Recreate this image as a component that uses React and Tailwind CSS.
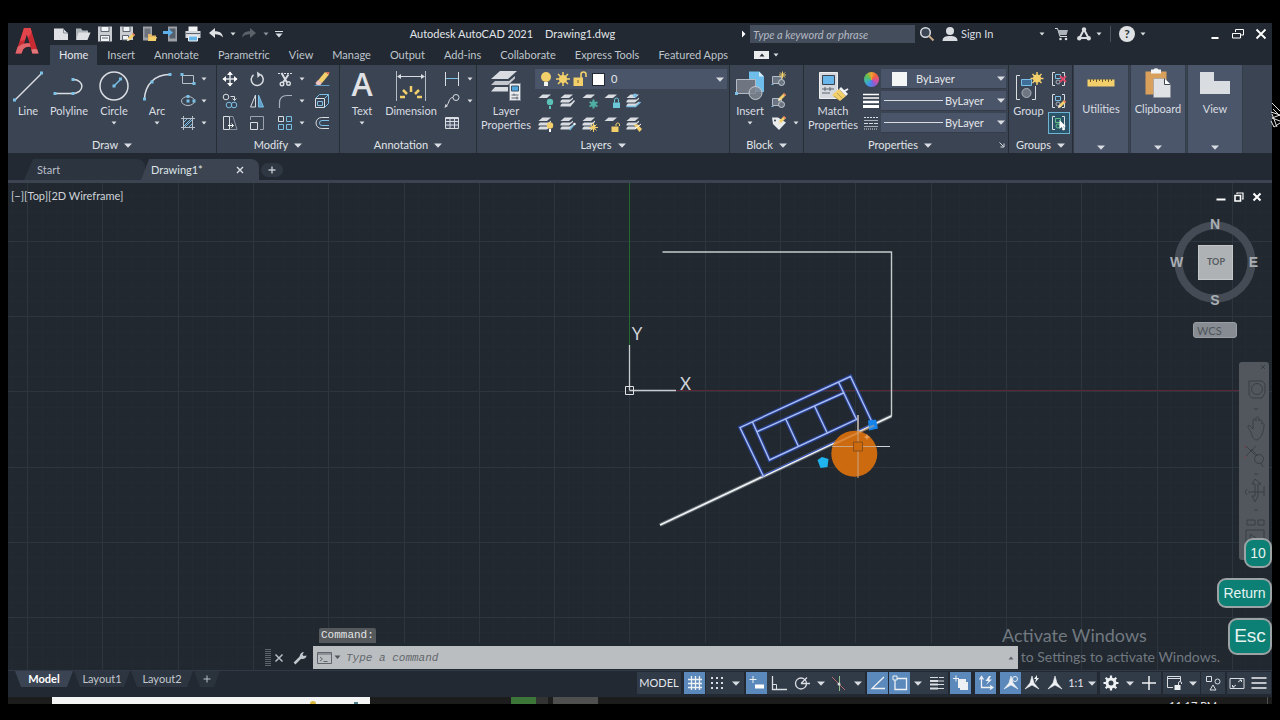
import React from "react";

/* ---------- shared helpers ---------- */

const LIGHT = "#d9dde2";
const BLUE = "#79bfe6";
const YELLOW = "#f3cf6b";

function Svg({ s = 16, w, h, vb, children, className = "" }) {
  return (
    <svg
      aria-hidden="true"
      width={w || s}
      height={h || s}
      viewBox={vb || `0 0 ${w || s} ${h || s}`}
      fill="none"
      stroke={LIGHT}
      className={`block shrink-0 ${className}`}
    >
      {children}
    </svg>
  );
}

function Caret({ className = "", big = false }) {
  return big ? (
    <Svg w={8} h={5} className={className}>
      <path d="M0 0.500h8L4 4.800z" fill={LIGHT} stroke="none" />
    </Svg>
  ) : (
    <Svg w={6} h={4} className={className}>
      <path d="M0.500 0.500h5L3 3.500z" fill={LIGHT} stroke="none" />
    </Svg>
  );
}

function IconButton({ label, className = "", children }) {
  return (
    <button type="button" aria-label={label} className={`flex shrink-0 items-center justify-center ${className}`}>
      {children}
    </button>
  );
}

/* ---------- quick access icons ---------- */

const Pencil = ({ x = 0, y = 0 }) => (
  <g transform={`translate(${x} ${y})`} stroke="none">
    <path d="M0 8l1-3 5-5 2 2-5 5z" fill={YELLOW} />
    <path d="M5 1l1-1 2 2-1 1z" fill="#e2705a" />
    <path d="M0 8l1-3 2 2z" fill="#f4ece0" />
  </g>
);

const NewIcon = () => (
  <Svg><path d="M1 2.500h9l5 5V14H1z" fill="#dfe1e4" stroke="none" /><path d="M10.500 2.500V7H15" stroke="#8b929c" /></Svg>
);
const OpenIcon = () => (
  <Svg><path d="M1 13V2.500h5l1.500 2H13V7" fill="#aeb3ba" stroke="none" /><path d="M3.500 6.500H15.500L12.500 14H1z" fill="#dfe1e4" stroke="none" /></Svg>
);
const SaveIcon = () => (
  <Svg>
    <path d="M1 0.500h14V15.500H1z" fill="#c9ccd1" stroke="none" />
    <path d="M4 0.500h8v5H4zM3.500 9.500h9v6h-9z" fill="#f2f3f4" stroke="#5d6571" />
    <path d="M5 12h6" stroke="#5d6571" />
  </Svg>
);
const SaveAsIcon = () => (
  <Svg>
    <path d="M1 0.500h13V14H1z" fill="#c9ccd1" stroke="none" />
    <path d="M4 0.500h7v5H4zM3.500 9.500h6V14h-6z" fill="#f2f3f4" stroke="#5d6571" />
    <Pencil x={8} y={7} />
  </Svg>
);
const WebOpenIcon = () => (
  <Svg>
    <path d="M2 0.500h9v14H2z" fill="#9da1a7" stroke="none" />
    <path d="M3.500 2.500h6v9h-6z" fill="#6d737c" stroke="none" />
    <path d="M7 8h3l1 1.500h4V15H7z" fill="#e5b968" stroke="none" />
    <path d="M8.500 11H16l-1.500 4H7z" fill={YELLOW} stroke="none" />
  </Svg>
);
const WebSaveIcon = () => (
  <Svg>
    <path d="M5 0.500h9v15H5z" fill="#9da1a7" stroke="none" />
    <path d="M6.500 2.500h6v10h-6z" fill="#56606d" stroke="none" />
    <path d="M0 5h5V2.500L10 6.500 5 10.500V8H0z" fill="#5fb0e8" stroke="none" />
  </Svg>
);
const PrintIcon = () => (
  <Svg>
    <path d="M3.500 0.500h9V5h-9z" fill="#f2f3f4" stroke="none" />
    <path d="M0.500 5h15v7h-15z" fill="#d5d8dc" stroke="none" />
    <path d="M1 7.500h14" stroke="#5d6571" />
    <path d="M3.500 10h9v5h-9z" fill="#69b7ea" stroke="#f2f3f4" />
  </Svg>
);
const UndoIcon = ({ dim }) => (
  <Svg className={dim ? "-scale-x-100 opacity-30" : ""}>
    <path d="M1 7l6-5v3.200c5 0 7.500 2 8 6.300-2-2.500-4.500-3.200-8-3.200V12z" fill="#dfe1e4" stroke="none" />
  </Svg>
);

const quickIcons = [
  ["New", NewIcon], ["Open", OpenIcon], ["Save", SaveIcon], ["Save As", SaveAsIcon],
  ["Open from Web", WebOpenIcon], ["Save to Web", WebSaveIcon], ["Plot", PrintIcon],
];

/* ---------- header ---------- */

function TitleBar() {
  return (
    <div className="flex h-[22px] items-center">
      <div className="flex w-[238px] shrink-0 items-center">
        {quickIcons.map(([label, I]) => (
          <IconButton key={label} label={label} className="w-[22px]"><I /></IconButton>
        ))}
        <IconButton label="Undo" className="w-6"><UndoIcon /></IconButton>
        <IconButton label="Undo list" className="w-[10px]"><Caret /></IconButton>
        <IconButton label="Redo" className="w-[22px]"><UndoIcon dim /></IconButton>
        <IconButton label="Redo list" className="w-3"><Caret className="opacity-60" /></IconButton>
        <IconButton label="Customize quick access" className="w-[14px]">
          <Svg s={8}><path d="M0 1.500h8" /><path d="M0.500 3.500h7L4 7.500z" fill={LIGHT} stroke="none" /></Svg>
        </IconButton>
      </div>
      <h1 className="flex flex-1 justify-center gap-3 text-[11px] leading-4 whitespace-nowrap text-[#e0e4e8]">
        <span>Autodesk AutoCAD 2021</span>
        <span>Drawing1.dwg</span>
      </h1>
      <div className="flex shrink-0 items-center">
        <IconButton label="Collapse search" className="w-[13px]">
          <Svg w={5} h={8}><path d="M1 0.500v7L4.500 4z" fill="#fff" stroke="none" /></Svg>
        </IconButton>
        <input
          type="search"
          aria-label="Search"
          placeholder="Type a keyword or phrase"
          className="h-[18px] w-[165px] bg-[#444d5c] px-[3px] text-[11px] leading-4 text-white italic outline-none placeholder:text-[#b3b9c2]"
        />
        <IconButton label="Find" className="w-6">
          <Svg><circle cx="6.500" cy="6.500" r="4.800" fill="#3c4654" strokeWidth="1.500" /><path d="M10 10l4.500 4.500" stroke="#c7a987" strokeWidth="2" /></Svg>
        </IconButton>
        <button type="button" className="flex items-center text-[11px] leading-4 text-[#d9dde2]">
          <span className="flex w-[22px] justify-center">
            <Svg><circle cx="8" cy="5" r="4" fill={LIGHT} stroke="none" /><path d="M0.500 15c0-4 3-5 7.500-5s7.500 1 7.500 5z" fill={LIGHT} stroke="none" /></Svg>
          </span>
          <span className="w-[73px] text-left">Sign In</span>
          <span className="flex w-4 justify-center"><Caret /></span>
        </button>
        <IconButton label="Autodesk App Store" className="w-6">
          <Svg w={14} h={14}>
            <path d="M0 1.500h2.500L5 9.500h7" /><path d="M3 3h10l-1.500 5H4.500z" fill="#aeb3ba" stroke="none" />
            <circle cx="5.500" cy="12" r="1.300" fill={LIGHT} stroke="none" /><circle cx="11" cy="12" r="1.300" fill={LIGHT} stroke="none" />
          </Svg>
        </IconButton>
        <IconButton label="Stay Connected" className="w-5">
          <Svg w={14} h={14}>
            <path d="M7 2.500L2.500 11M7 2.500L11.500 11M2.500 11h9" strokeWidth="2" />
            <circle cx="7" cy="2.500" r="2.200" fill={LIGHT} stroke="none" /><circle cx="2.300" cy="11.300" r="2.200" fill={LIGHT} stroke="none" /><circle cx="11.700" cy="11.300" r="2.200" fill={LIGHT} stroke="none" />
          </Svg>
        </IconButton>
        <IconButton label="Connection options" className="w-[10px]"><Caret /></IconButton>
        <span className="mr-1 ml-1.5 h-4 w-px bg-[#4a525d]" />
        <button type="button" aria-label="Help" className="mx-1 flex size-4 items-center justify-center rounded-full bg-[#dfe1e4] text-[12px] leading-4 font-bold text-[#2a313b]">?</button>
        <IconButton label="Help options" className="w-2"><Caret /></IconButton>
        <IconButton label="Minimize" className="ml-[57px] h-[18px] w-[22px]">
          <Svg s={12}><path d="M2.500 10h7" strokeWidth="2" stroke="#fff" /></Svg>
        </IconButton>
        <IconButton label="Restore" className="w-6">
          <Svg s={12}><path d="M3.500 4V1.500h8v5.500H9" stroke="#fff" /><path d="M0.500 5.500h8V10h-8z" stroke="#fff" /></Svg>
        </IconButton>
        <IconButton label="Close" className="w-[22px]">
          <Svg s={12}><path d="M1.500 1.500l9 9M10.500 1.500l-9 9" stroke="#fff" strokeWidth="1.800" /></Svg>
        </IconButton>
      </div>
    </div>
  );
}

const ribbonTabs = ["Home", "Insert", "Annotate", "Parametric", "View", "Manage", "Output", "Add-ins", "Collaborate", "Express Tools", "Featured Apps"];

function Header() {
  return (
    <header className="flex">
      <button type="button" aria-label="Application menu" className="flex w-[42px] shrink-0 items-start justify-center pt-1 pr-[5px]">
        <Svg w={24} h={28}>
          <path d="M9 1h6.500L23.500 26.500h-6.200L15.500 20C12 19 9.500 20.500 8 22.500L6.500 26.500H0.500z" fill="#c92b33" stroke="none" />
          <path d="M9 1h6.500l1.200 4c-2 5-6 9-11.700 9z" fill="#e2444c" stroke="none" />
          <path d="M11.800 7.500l2.700 8.500c-2 0-4 .5-5.600 1.200z" fill="#222932" stroke="none" />
          <path d="M0.500 26.500l2-6.500c4-3.500 9-4.500 12.300-3.500l.7 3.500C12 19 9.500 20.500 8 22.500L6.500 26.500z" fill="#e0666c" stroke="none" />
          <path d="M17.300 26.500l-1-4c2-.8 4-.8 6 0l1.200 4z" fill="#e0777c" stroke="none" />
        </Svg>
      </button>
      <div className="min-w-0 flex-1">
        <TitleBar />
        <nav aria-label="Ribbon tabs" className="flex h-5 items-center gap-px">
          {ribbonTabs.map((t, i) => (
            <button
              key={t}
              type="button"
              className={`h-5 px-[9px] text-[11px] leading-5 whitespace-nowrap ${i === 0 ? "bg-[#3b4453] text-[#e4e7eb]" : "text-[#bfc5cc]"}`}
            >
              {t}
            </button>
          ))}
          <IconButton label="Minimize ribbon" className="ml-4 h-2 w-[15px] bg-[#e9ebed]">
            <Svg w={6} h={4}><path d="M0.500 3.500h5L3 0.500z" fill="#222932" stroke="none" /></Svg>
          </IconButton>
          <IconButton label="Ribbon options" className="w-3"><Caret /></IconButton>
        </nav>
      </div>
    </header>
  );
}

/* ---------- ribbon pieces ---------- */

function Panel({ title, className = "", children, launcher = false }) {
  return (
    <section aria-label={title} className={`flex shrink-0 flex-col border-r border-[#262d37] bg-[#3b4453] ${className}`}>
      <div className="flex h-[72px] pt-[3px]">{children}</div>
      <div className="flex items-center">
        <button type="button" className="flex h-4 flex-1 items-center justify-center gap-1.5 text-[11px] leading-4 text-[#e0e4e8]">
          {title}
          <Caret big />
        </button>
        {launcher && (
          <IconButton label="Properties palette" className="w-3">
            <Svg s={6}><path d="M0.500 0.500l4 4M5 1.500V5H1.500" /></Svg>
          </IconButton>
        )}
      </div>
    </section>
  );
}

function BigButton({ label, className, children, caret = false }) {
  return (
    <button type="button" className={`flex shrink-0 flex-col items-center ${className}`}>
      <span className="flex h-9 items-center">{children}</span>
      <span className="text-[11px] leading-[14px] text-[#d9dde2]">{label}</span>
      {caret && <Caret className="mt-[3px]" />}
    </button>
  );
}

const dot = (x, y, k) => <rect key={k} x={x - 1.5} y={y - 1.5} width="3" height="3" fill={BLUE} stroke="none" />;

function Tool({ label, className, children }) {
  return <IconButton label={label} className={`h-[22px] ${className}`}>{children}</IconButton>;
}

function DrawPanel() {
  return (
    <Panel title="Draw" className="w-[209px]">
      <BigButton label="Line" className="w-10">
        <Svg s={32}><path d="M3 30L29 4" strokeWidth="1.500" />{dot(2.5, 30)}{dot(29.5, 3)}</Svg>
      </BigButton>
      <BigButton label="Polyline" className="w-[42px]">
        <Svg s={32}><path d="M1 23.500H19C32 23.500 32 9.500 20 9.500" strokeWidth="1.500" />{dot(2, 23.5)}{dot(20, 23.5)}{dot(20, 9.5)}</Svg>
      </BigButton>
      <BigButton label="Circle" className="w-12" caret>
        <Svg s={32}><circle cx="16" cy="16" r="14" strokeWidth="1.500" /><path d="M16 16L22 10" stroke={BLUE} strokeWidth="1.500" />{dot(16, 16)}{dot(22.5, 9)}</Svg>
      </BigButton>
      <BigButton label="Arc" className="w-[38px]" caret>
        <Svg s={32}><path d="M3.500 29C4 15 14 4 29 4.500" strokeWidth="1.500" />{dot(3.5, 29)}{dot(11, 12)}{dot(29, 4.5)}</Svg>
      </BigButton>
      <div className="flex flex-col">
        <div className="flex">
          <Tool label="Rectangle" className="w-6"><Svg><path d="M2.500 4.500h11v8h-11z" stroke="#b9bfc8" />{dot(2, 3.5)}{dot(14, 12.5)}</Svg></Tool>
          <Tool label="Rectangle options" className="w-2"><Caret /></Tool>
        </div>
        <div className="flex">
          <Tool label="Ellipse" className="w-6"><Svg><ellipse cx="8" cy="8" rx="6.500" ry="4.500" stroke="#b9bfc8" />{dot(8, 8)}{dot(8, 3.5)}{dot(14, 8)}</Svg></Tool>
          <Tool label="Ellipse options" className="w-2"><Caret /></Tool>
        </div>
        <div className="flex">
          <Tool label="Hatch" className="w-6"><Svg><path d="M3.500 1v14M12.500 1v14M1 3.500h14M1 12.500h14" stroke="#b9bfc8" /><path d="M4 7l3-3M4 11l7-7M5 12l7-7M9 12l3-3" stroke={BLUE} /></Svg></Tool>
          <Tool label="Hatch options" className="w-2"><Caret /></Tool>
        </div>
      </div>
    </Panel>
  );
}

function ModifyPanel() {
  const rows = [
    [
      ["Move", <Svg><path d="M8 1v14M1 8h14" strokeWidth="1.500" /><path d="M5 4L8 0.500 11 4zM5 12l3 3.500 3-3.500zM4 5L0.500 8 4 11zM12 5l3.500 3-3.500 3z" fill="#fff" stroke="none" /></Svg>],
      ["Rotate", <Svg><path d="M11.500 3.500A6 6 0 1 1 4.500 3.800" strokeWidth="1.500" /><path d="M8 0.500l4 3-3.500 3.500z" fill={LIGHT} stroke="none" /></Svg>],
      ["Trim", <Svg><path d="M1 2.500h14" strokeDasharray="2 1" /><path d="M4.500 2l5.500 9.500M11.500 3.500L6 11.500" strokeWidth="2" /><circle cx="5" cy="13" r="1.800" strokeWidth="1.400" /><circle cx="11.500" cy="12.500" r="1.800" strokeWidth="1.400" /></Svg>],
      ["Erase", <Svg><path d="M4 9.500L11 1l4 2.500L8 12z" fill={YELLOW} stroke="none" /><path d="M1.500 12l2.500-3 4 3-2 2.500H3z" fill="#f1c3c0" stroke="none" /><path d="M11 1l4 2.500 .5-2.500z" fill="#e2705a" stroke="none" /><path d="M0.500 14.500h15" stroke="#5f9cc4" /></Svg>],
    ],
    [
      ["Copy", <Svg><circle cx="4" cy="4" r="2.800" /><path d="M8.500 3.500h4V7M10.500 5.500l2 2 2-2" /><circle cx="7" cy="12" r="2.800" stroke={BLUE} /><circle cx="12" cy="12" r="2.800" stroke={BLUE} /></Svg>],
      ["Mirror", <Svg><path d="M6.500 2v12h-5z" /><path d="M9.500 2v12h5z" fill="#5f9cc4" stroke={BLUE} /></Svg>],
      ["Fillet", <Svg><path d="M2.500 15V10C2.500 5 5 2.500 10 2.500h5" strokeWidth="1.200" stroke="#aab1bb" /></Svg>],
      ["Explode", <Svg><path d="M1.500 5.500h9v9h-9z" /><path d="M1.500 5.500l4-4h9v9l-4 4M10.500 5.500l4-4" stroke={BLUE} /><path d="M3.500 8.500h5v4h-5z" stroke={BLUE} /></Svg>],
    ],
    [
      ["Stretch", <Svg><path d="M1.500 1.500h6v13h-6z" /><path d="M8 1.500h3l4 13H8" stroke="#8a93a0" /><path d="M6 10.500h5M9.500 8.500l2 2-2 2" stroke="#fff" /></Svg>],
      ["Scale", <Svg><path d="M1.500 7.500h7v7h-7z" /><path d="M1.500 5V1.500h13v13H11" stroke="#9aa2ae" /></Svg>],
      ["Array", <Svg><path d="M1.500 1.500h5v5h-5z" /><path d="M9.500 1.500h5v5h-5zM1.500 9.500h5v5h-5zM9.500 9.500h5v5h-5z" stroke={BLUE} /></Svg>],
      ["Offset", <Svg><path d="M15 2.500H7.500a5.500 5.500 0 0 0 0 11H15" /><path d="M15 5.500H8a2.500 2.500 0 0 0 0 5H15" stroke={BLUE} /></Svg>],
    ],
  ];
  return (
    <Panel title="Modify" className="w-[123px]">
      <div className="flex flex-col">
        {rows.map((r, i) => (
          <div key={i} className="flex">
            <Tool label={r[0][0]} className="w-[26px]">{r[0][1]}</Tool>
            <Tool label={r[1][0]} className="w-7">{r[1][1]}</Tool>
            <Tool label={r[2][0]} className="w-7">{r[2][1]}</Tool>
            <Tool label={`${r[2][0]} options`} className="w-1.5"><Caret /></Tool>
            <Tool label={r[3][0]} className="w-[34px]">{r[3][1]}</Tool>
          </div>
        ))}
      </div>
    </Panel>
  );
}

function AnnotationPanel() {
  return (
    <Panel title="Annotation" className="w-[137px]">
      <BigButton label="Text" className="w-11" caret>
        <span className="pb-1 font-['Open_Sans','Noto_Sans',sans-serif] text-[32px] leading-8 font-semibold text-[#dfe1e4]">A</span>
      </BigButton>
      <BigButton label="Dimension" className="w-[54px]">
        <Svg s={32}>
          <path d="M1.500 1v30M30.500 1v30" stroke="#b5bbc4" /><path d="M3 6.500h26" />
          <path d="M2 6.500l4-2.500v5zM30 6.500l-4-2.500v5z" fill={LIGHT} stroke="none" />
          <path d="M5 27h5M22 27h5M8 20l4 4M24 20l-4 4M16 16v6" stroke={YELLOW} strokeWidth="2.500" />
        </Svg>
      </BigButton>
      <div className="flex flex-col">
        <div className="flex">
          <Tool label="Linear" className="w-7"><Svg><path d="M1.500 1v14M14.500 1v14" /><path d="M2 7.500h12" stroke={BLUE} /></Svg></Tool>
          <Tool label="Linear options" className="w-2"><Caret /></Tool>
        </div>
        <div className="flex">
          <Tool label="Leader" className="w-7"><Svg><circle cx="12" cy="4.500" r="3" /><path d="M9 4.500C4 5 6 10 2 13" /><path d="M0.500 15l1-4 2.500 2z" fill={LIGHT} stroke="none" /></Svg></Tool>
          <Tool label="Leader options" className="w-2"><Caret /></Tool>
        </div>
        <Tool label="Table" className="w-7"><Svg><path d="M1.500 2.500h13v11h-13z" fill="#4b5569" /><path d="M1.500 3.500h13M1.500 6.500h13M1.500 10h13M6 4v10M10.500 4v10" /></Svg></Tool>
      </div>
    </Panel>
  );
}

/* stacked sheets used by the layer commands */
const Sheets = ({ n = 3 }) => (
  <g stroke="none" fill={LIGHT}>
    <path d="M4.500 1.500H13L9 5H0.500z" />
    {n > 1 && <path d="M2 6.500h8.500L13 4.500V6L9 9.500H0.500V8z" />}
    {n > 2 && <path d="M2 10.500h8L13 8.500V10L9 13.500H0.500V12z" />}
  </g>
);

const layerTools = [
  ["Off", 1, <circle cx="12" cy="9" r="3.200" fill="#5cc2b8" stroke="none" />, <path d="M11 13h2v3h-2z" fill="#5cc2b8" stroke="none" />],
  ["Isolate", 3, <path d="M14.500 7.500l-5 6" strokeWidth="1.500" />, null],
  ["Freeze", 1, <path d="M11.500 6.500v9M7.500 9l8 4.500M15.500 9l-8 4.500" stroke="#4faea4" strokeWidth="2" />, <circle cx="11.500" cy="11" r="2.800" fill="#4faea4" stroke="none" />],
  ["Lock", 1, <path d="M9 9.500h7V15H9z" fill="#6cc7d6" stroke="none" />, <path d="M10.500 9.500V7a2 2 0 0 1 4 0v2.500" stroke="#6cc7d6" />],
  ["Make Current", 3, <path d="M0.500 13.500h9l5-4.500" stroke={BLUE} strokeWidth="1.500" />, <circle cx="9" cy="2.500" r="2" fill={BLUE} stroke="none" />],
  ["Turn All On", 3, <circle cx="12" cy="9.500" r="3.200" fill={YELLOW} stroke="none" />, <path d="M11 13h2v3h-2z" fill="#fff" stroke="none" />],
  ["Unisolate", 3, <path d="M14.500 8l-5 6" stroke={BLUE} strokeWidth="1.500" />, <circle cx="14.500" cy="8" r="1.200" fill="#fff" stroke="none" />],
  ["Thaw All", 3, <path d="M11.500 7v9M7 11.500h9M8.500 8.500l6 6M14.500 8.500l-6 6" stroke={YELLOW} />, <circle cx="11.500" cy="11.500" r="2.200" fill={YELLOW} stroke="none" />],
  ["Unlock", 1, <path d="M7.500 10.500h7V16h-7z" fill={YELLOW} stroke="none" />, <path d="M12 10V8a2 2 0 0 1 3.500 0v2" stroke={YELLOW} />],
  ["Match Layer", 3, <path d="M8 9l3-1 5 5-2.500 3z" fill={YELLOW} stroke="none" />, <path d="M9 13l6-5" stroke="#fff" />],
];

function LayersPanel() {
  return (
    <Panel title="Layers" className="w-[253px]">
      <BigButton className="w-[58px]" label={<>Layer<br />Properties</>}>
        <Svg s={32}>
          <g stroke="none" fill={LIGHT}>
            <path d="M10 1h17l-9 8H1z" />
            <path d="M5 11h14l6-5v2.500L18 15H1z" fill="#c3c7cd" />
            <path d="M5 17h13v4.500H1z" />
          </g>
          <path d="M19.500 13.500h11v17h-11z" fill="#e9ebed" stroke="#7b838e" />
          <path d="M21.500 16h7v5h-7z" fill="#4fa6dd" stroke="#37506b" />
          <path d="M21.500 25h7M21.500 28h7M24 23.500v2M27 26.500v3" stroke="#5d6571" />
        </Svg>
      </BigButton>
      <div className="flex flex-1 flex-col pt-px pr-[2px]">
        <div className="relative">
          <div className="pointer-events-none absolute inset-y-0 left-[3px] flex items-center gap-px">
            <Svg><circle cx="8" cy="6" r="5" fill={YELLOW} stroke="none" /><path d="M6 11h4v4H6z" fill="#f2f3f4" stroke="none" /></Svg>
            <Svg><path d="M8 1v14M1 8h14M3 3l10 10M13 3L3 13" stroke={YELLOW} strokeWidth="1.500" /><circle cx="8" cy="8" r="4" fill={YELLOW} stroke="none" /></Svg>
            <Svg><path d="M1.500 6.500h9.500V15H1.500z" fill={YELLOW} stroke="none" /><path d="M9 7V3.500a2.500 2.500 0 0 1 5 0V6" stroke={YELLOW} strokeWidth="1.600" /><path d="M6 9v3" stroke="#7a622a" /></Svg>
            <span className="ml-[3px] size-[13px] border border-[#222932] bg-white" />
          </div>
          <select aria-label="Current layer" className="block h-5 w-full appearance-none rounded-none bg-[#4b5569] pl-[76px] text-[11px] leading-5 text-[#e4e7eb] outline-none">
            <option>0</option>
          </select>
          <Caret big className="pointer-events-none absolute top-2 right-[3px]" />
        </div>
        {[0, 5].map((o) => (
          <div key={o} className="mt-px flex">
            {layerTools.slice(o, o + 5).map(([l, n, a, b]) => (
              <Tool key={l} label={l} className="w-[22px]"><Svg><Sheets n={n} />{a}{b}</Svg></Tool>
            ))}
          </div>
        ))}
      </div>
    </Panel>
  );
}

const MiniBlock = () => (
  <><path d="M1.500 5.500h9v7h-9z" fill="#6b7482" stroke="#b5bbc4" /><circle cx="10.500" cy="11.500" r="3" fill="#6b7482" stroke="#c6cbd1" /><path d="M0.500 13.500h2" stroke={BLUE} /></>
);

function BlockPanel() {
  return (
    <Panel title="Block" className="w-[74px]">
      <BigButton label="Insert" className="w-10" caret>
        <Svg s={32}>
          <path d="M15 1.500h10l5 5V22H15z" fill="#6fbdea" stroke="none" />
          <path d="M25 1.500v5h5z" fill="#d5ecf9" stroke="none" />
          <path d="M2.500 9.500h19v14h-19z" fill="#6f7681" stroke="#b5bbc4" />
          <circle cx="21.500" cy="23" r="6.500" fill="#7f8691" fillOpacity="0.850" stroke="#c6cbd1" />
          {dot(2.5, 23.5)}
        </Svg>
      </BigButton>
      <div className="flex flex-col">
        <Tool label="Create Block" className="w-[18px]"><Svg><MiniBlock /><path d="M11.500 0.500v7M8 4h7M9 1.500l5 5M14 1.500l-5 5" stroke={YELLOW} /></Svg></Tool>
        <Tool label="Edit Block" className="w-[18px]"><Svg><MiniBlock /><Pencil x={7} y={0} /></Svg></Tool>
        <div className="flex">
          <Tool label="Edit Attributes" className="w-[18px]"><Svg><path d="M1 2.500h6l8 5-7 7.500-6-6z" fill="#e9ebed" stroke="none" /><circle cx="4" cy="5.500" r="1" fill="#3b4453" stroke="none" /><Pencil x={7} y={1} /></Svg></Tool>
          <Tool label="Attribute options" className="w-4"><Caret /></Tool>
        </div>
      </div>
    </Panel>
  );
}

function PropSelect({ label, swatch = false }) {
  return (
    <div className="relative h-[22px]">
      <select
        aria-label={label}
        className={`block h-5 w-[125px] appearance-none rounded-none border-b border-[#343c49] bg-[#4b5569] text-[11px] leading-[19px] text-[#e4e7eb] outline-none ${swatch ? "pl-[35px]" : "pl-[64px]"}`}
      >
        <option>ByLayer</option>
      </select>
      {swatch ? (
        <span className="pointer-events-none absolute top-[3px] left-[11px] h-[14px] w-[15px] bg-[#f4f6f6]" />
      ) : (
        <span className="pointer-events-none absolute top-[9px] left-[3px] h-px w-[59px] bg-[#d9dde2]" />
      )}
      <Caret big className="pointer-events-none absolute top-[7px] right-px" />
    </div>
  );
}

function PropertiesPanel() {
  return (
    <Panel title="Properties" className="w-[205px]" launcher>
      <BigButton className="w-[58px]" label={<>Match<br />Properties</>}>
        <Svg s={32}>
          <path d="M2.500 2.500h18v26h-18z" fill="#d5d8dc" stroke="#eceef0" />
          <path d="M5.500 5.500h12v9h-12z" fill="#69b7ea" stroke="#39424f" />
          <path d="M5 19h12M5 23h8M8 17v4M13 17v4" stroke="#5d6571" />
          <path d="M15 25l7-6 7 7-6 5z" fill={YELLOW} stroke="none" /><path d="M17 26l5 4M20 23l5 5" stroke="#b9a34f" /><path d="M22 19l2-2 7 7-2 2z" fill="#f2f3f4" stroke="none" />
          <path d="M26 22l5-3" stroke="#f2f3f4" strokeWidth="2" />
        </Svg>
      </BigButton>
      <div className="flex flex-col">
        <Tool label="Object color" className="w-[18px]">
          <span className="size-[15px] rounded-full bg-[conic-gradient(from_0deg,#f0a030,#f06040,#d850a0,#8060d8,#4090e8,#40b8a8,#60c050,#f0a030)]" />
        </Tool>
        <Tool label="Lineweight" className="w-[18px]"><Svg><path d="M0 1.500h16M0 5h16" strokeWidth="1.500" stroke="#fff" /><path d="M0 9h16" strokeWidth="2.500" stroke="#fff" /><path d="M0 13.500h16" strokeWidth="3" stroke="#fff" /></Svg></Tool>
        <Tool label="Linetype" className="w-[18px]"><Svg><path d="M1 2.500h14" strokeDasharray="2 1" /><path d="M1 5.500h14M1 11.500h14" stroke="#aab1bb" /><path d="M1 8.500h14" strokeDasharray="4 1" /><path d="M1 14h14" strokeDasharray="1 1" /></Svg></Tool>
      </div>
      <div className="ml-px flex flex-col pt-px">
        <PropSelect label="Color" swatch />
        <PropSelect label="Lineweight value" />
        <PropSelect label="Linetype value" />
      </div>
    </Panel>
  );
}

const Bracket = ({ extra }) => (
  <><path d="M4 1.500H1.500v13H4M11 1.500h2.500v13H11" /><path d="M4.500 3.500h5v4h-5z" stroke={extra || BLUE} /><circle cx="7" cy="11" r="2" stroke={extra || "#aab1bb"} /></>
);

function GroupsPanel() {
  return (
    <Panel title="Groups" className="w-[64px]">
      <BigButton label="Group" className="w-[39px]">
        <Svg s={32}>
          <path d="M7 5.500H3.500v24H7M19 29.500h3.500V16" />
          <path d="M8.500 9.500h10v6h-10z" fill="#3f6f98" stroke={BLUE} /><circle cx="13.500" cy="23" r="4.500" fill="#6f7681" stroke="#aab1bb" />
          <path d="M24 2v13M17.500 8.500h13M19.500 4l9 9M28.500 4l-9 9" stroke={YELLOW} strokeWidth="1.500" /><circle cx="24" cy="8.500" r="4" fill={YELLOW} stroke="none" />
        </Svg>
      </BigButton>
      <div className="flex flex-col">
        <Tool label="Ungroup" className="w-[22px]"><Svg><Bracket /><path d="M9 5l6 6M15 5l-6 6" stroke="#e0486a" strokeWidth="1.800" /></Svg></Tool>
        <Tool label="Group Edit" className="w-[22px]"><Svg><Bracket /><Pencil x={7} y={7} /></Svg></Tool>
        <Tool label="Group Selection" className="w-[22px] border border-[#6fb4d4] bg-[#2c5468]"><Svg><Bracket extra="#5fc08a" /><path d="M8.500 5v9l2.200-2 1.600 3.500 1.500-.7-1.500-3.300h2.700z" fill="#fff" stroke="none" /></Svg></Tool>
      </div>
    </Panel>
  );
}

function Collapsed({ label, children }) {
  return (
    <button type="button" className="mr-px flex w-[56px] shrink-0 flex-col items-center border-x border-[#343d4a] bg-[#4b566a]">
      <span className="flex h-9 items-center">{children}</span>
      <span className="flex-1 text-[11px] leading-4 text-[#d9dde2]">{label}</span>
      <Caret big className="mb-[3px]" />
    </button>
  );
}

function Ribbon() {
  return (
    <div role="toolbar" aria-label="Ribbon" className="flex h-[88px] overflow-hidden bg-[#3b4453]">
      <DrawPanel />
      <ModifyPanel />
      <AnnotationPanel />
      <LayersPanel />
      <BlockPanel />
      <PropertiesPanel />
      <GroupsPanel />
      <Collapsed label="Utilities">
        <Svg w={28} h={8}><path d="M0.500 0.500h27v7h-27z" fill={YELLOW} stroke="none" /><path d="M3.500 0v3M6.500 0v2M9.500 0v3M12.500 0v2M15.500 0v3M18.500 0v2M21.500 0v3M24.500 0v2" stroke="#6d5a2c" /></Svg>
      </Collapsed>
      <Collapsed label="Clipboard">
        <Svg w={26} h={30}>
          <path d="M0.500 3.500h21v23h-21z" fill="#d9a05c" stroke="none" /><path d="M6 1.500h2.500a3 3 0 0 1 5 0H16v4H6z" fill="#f2f3f4" stroke="none" />
          <path d="M8.500 10.500h11l6 6v13h-17z" fill="#dfe1e4" stroke="#8a8f96" strokeWidth="0.500" /><path d="M19.500 10.500v6h6" fill="#fff" stroke="#3b4453" />
        </Svg>
      </Collapsed>
      <Collapsed label="View">
        <Svg w={30} h={24}><path d="M0 1h14v9h16v13H0z" fill="#d9dce1" stroke="none" /></Svg>
      </Collapsed>
      <div className="flex-1" />
    </div>
  );
}

/* ---------- document tabs ---------- */

function FileTabs() {
  return (
    <nav aria-label="Drawings" className="flex h-[30px] items-end border-b-3 border-[#3b4450] bg-[#222932] pl-4 text-[11px] leading-5">
      <button type="button" className="h-[21px] w-[121px] rounded-tr-lg bg-[#2c343f] pl-[13px] text-left text-[#b9bfc7] [clip-path:polygon(9px_0,100%_0,100%_100%,0_100%)]">Start</button>
      <div className="-ml-1 flex h-[21px] w-[118px] items-center justify-between rounded-tr-lg bg-[#3b4450] pr-[14px] pl-[10px] text-[#dfe3e7] [clip-path:polygon(8px_0,100%_0,100%_100%,0_100%)]">
        <button type="button">Drawing1*</button>
        <IconButton label="Close Drawing1" className="size-2.5"><Svg s={8}><path d="M1 1l6 6M7 1L1 7" strokeWidth="1.400" /></Svg></IconButton>
      </div>
      <IconButton label="New drawing" className="mb-[3px] ml-[2px] h-[14px] w-[22px] rounded-full bg-[#2f3742]">
        <Svg s={8}><path d="M4 0.500v7M0.500 4h7" stroke="#c3c8ce" strokeWidth="1.400" /></Svg>
      </IconButton>
    </nav>
  );
}

/* ---------- drawing area ---------- */

const majors = Array.from({ length: 40 }, (_, i) => i);
const sofa = "M763.500 476.500L740 427.500 850.500 376.500 872 422M752.500 422L769.500 460 856.500 419.500 838.500 382M757.500 431.500L844.500 392.500M786 419.500L798.500 446.500M814.500 406L827 432.500";

function Model() {
  return (
    <svg role="img" aria-label="Model space with a sofa aligned to a wall" className="absolute inset-0 h-full w-full" fill="none">
      <g stroke="#232a32">
        {majors.flatMap((i) => [1, 2, 3, 4].map((j) => (
          <path key={`${i}-${j}`} d={`M${Math.round(19 + i * 75.2 - 75.2 + j * 15) + 0.5} 0V3000M0 ${Math.round(58 + i * 75.3 - 75.3 + j * 15) + 0.5}H4000`} />
        )))}
      </g>
      <g stroke="#2d353e">
        {majors.map((i) => (
          <path key={i} d={`M${Math.round(19 + i * 75.3) + 0.5} 0V3000M0 ${Math.round(58 + i * 75.2) + 0.5}H4000`} />
        ))}
      </g>
      <g transform="translate(-8 -183)">
        <path d="M629.500 183V345" stroke="#1f6a2c" />
        <path d="M676 390.500H1240" stroke="#5c2732" />
        <path d="M629.500 390.500V345M629.500 390.500H676" stroke="#c8ccd0" strokeWidth="1.300" />
        <path d="M625.500 386.500h8v8h-8z" stroke="#dfe1e4" />
        <path d="M662.500 252H891.500V416" stroke="#c6cacd" strokeWidth="1.400" />
        <path d="M660 525L891.500 416" stroke="#8f979f" strokeOpacity="0.500" strokeWidth="4" />
        <path d="M660 525L891.500 416" stroke="#eef0f2" strokeWidth="1.800" />
        <path d={sofa} stroke="#2c4fc4" strokeOpacity="0.600" strokeWidth="4" />
        <path d={sofa} stroke="#a9bdf5" strokeWidth="1.400" />
        <path d="M765 474.500L868 426" stroke="#2c4fc4" />
        <path d="M868 420.500l8-1 2 9-9 2z" fill="#1583ea" />
        <path d="M817.500 460l4.500-3 6.500 2-1 8-7 1z" fill="#1fb4ee" />
        <circle cx="854.300" cy="453.700" r="23" fill="#cc6a10" />
        <path d="M833 444.500L874 425.500" stroke="#f2b273" strokeOpacity="0.400" strokeWidth="2" />
        <path d="M858 415V478M832 446.500H890" stroke="#c9a583" />
        <path d="M858 415V431M877 446.500H890" stroke="#d0d4d8" />
        <path d="M853.500 442h9v9h-9z" fill="#cc6a10" stroke="#8a4e18" />
        <path d="M867 434.500v5M864.500 437h5" stroke="#f2b273" />
        <g fill="#d0d4d8" className="font-['Lato','Noto_Sans',sans-serif] text-[17px]">
          <text x="637" y="340" textAnchor="middle">Y</text>
          <text x="685.500" y="390" textAnchor="middle">X</text>
        </g>
      </g>
    </svg>
  );
}

function ViewCube() {
  return (
    <div className="relative flex h-[92px] w-[92px] flex-col justify-between font-['Liberation_Sans',Arial,sans-serif] text-[14px] leading-4 font-bold text-[#a9aeb3]">
      <svg aria-hidden="true" viewBox="0 0 92 92" className="absolute inset-0 h-full w-full">
        <circle cx="46" cy="46" r="36.500" fill="none" stroke="#444b54" strokeWidth="8" />
      </svg>
      <span className="relative text-center">N</span>
      <span className="relative flex items-center justify-between px-px">
        <span>W</span>
        <button type="button" className="size-[35px] border border-[#c4c7ca] bg-[#aeb2b5] font-['Lato','Noto_Sans',sans-serif] text-[9px] text-[#555a60]">TOP</button>
        <span className="pr-0.5">E</span>
      </span>
      <span className="relative text-center">S</span>
    </div>
  );
}

function NavBar() {
  return (
    <div role="toolbar" aria-label="Navigation" className="flex h-[198px] w-[30px] flex-col items-center rounded-[3px] bg-[#52575d]">
      <Svg w={28} h={190} className="opacity-80">
        <g stroke="#343a41">
          <path d="M21 3l4 4M25 3l-4 4" />
          <path d="M9 19h13l3 3v9l-3 5H12l-3-3z" /><circle cx="17" cy="27" r="5.500" />
          <path d="M14 47h4" />
          <path d="M11 70c-3-4-4-6-2-7l4 4V58c1-2 2-1 3 1V56c1-2 3-1 3 1v2c1-2 3-1 3 1v2c1-1 3 0 2 2-1 8-3 12-7 14-4 0-5-4-6-8" />
          <path d="M6 84l10 10M16 84L6 94M18 94l-7-7" /><circle cx="19" cy="97" r="4.500" /><path d="M21 101l2 4" />
          <path d="M14 112h4" />
          <path d="M15 117l-3 5h3v12h-3l3 6 3-6v-12h3zM8 130h16M7 127l-2 3 2 3M24 124v10" />
          <path d="M14 148h4" />
          <path d="M7 158h8v5H7zM18 158h6v5h-6zM6 168h18v14H6zM10 172l6 4-6 4z" />
        </g>
        <path d="M4 84l2 2M4 96l2-2" stroke="#7d3a40" />
      </Svg>
    </div>
  );
}

function KeyBadge({ className, children }) {
  return (
    <kbd className={`flex items-center justify-center rounded-[9px] border-2 border-[#9ba3a4] bg-[#0c8074] font-['Liberation_Sans',Arial,sans-serif] text-[#e6f3f1] ${className}`}>
      {children}
    </kbd>
  );
}

function CommandLine() {
  return (
    <div className="absolute inset-x-[254px] bottom-0 flex h-[42px] flex-col">
      <div className="h-[15px] pl-[57px]">
        <output className="block h-[15px] w-[57px] rounded-t-[2px] bg-[#55595c] px-0.5 font-['Liberation_Mono','Courier_New',monospace] text-[11px] leading-[15px] text-[#e2e4e6]">Command:</output>
      </div>
      <div className="flex flex-1 items-center bg-[#212830] pt-[2px]">
        <Svg w={6} h={18} className="ml-[3px]"><path d="M1 0v18M3 0v18M5 0v18" stroke="#9aa0a7" strokeDasharray="1 1" /></Svg>
        <IconButton label="Close command line" className="w-4"><Svg s={10}><path d="M1.500 1.500l7 7M8.500 1.500l-7 7" stroke="#b9bec4" strokeWidth="1.500" /></Svg></IconButton>
        <IconButton label="Customize" className="w-[26px]">
          <Svg w={14} h={14}><path d="M1.500 12.500L8 6" stroke="#c3c8ce" strokeWidth="2.500" /><path d="M7 7.500C6 4 8 1 11 1L9.500 3.500l1 1.500 3-.5C13.500 7.500 10 9 7 7.500z" fill="#c3c8ce" stroke="none" /></Svg>
        </IconButton>
        <div className="flex h-[23px] flex-1 items-center bg-[#bbbec1]">
          <button type="button" aria-label="Recent commands" className="flex w-7 items-center gap-0.5 pl-1">
            <Svg w={15} h={12}><path d="M0.500 0.500h14v11h-14z" stroke="#5f656c" /><path d="M1 2h13" stroke="#5f656c" /><path d="M3 5l2.500 2L3 9M6.500 9.500h4" stroke="#5f656c" /></Svg>
            <Svg w={7} h={5}><path d="M0.500 0.500h6L3.500 4z" fill="#50555b" stroke="none" /></Svg>
          </button>
          <input
            aria-label="Command"
            placeholder="Type a command"
            className="h-full min-w-0 flex-1 bg-transparent pl-[5px] font-['Liberation_Mono','Courier_New',monospace] text-[11px] text-[#33383e] italic outline-none placeholder:text-[#62676c]"
          />
          <IconButton label="Command history" className="w-[14px]"><Svg w={6} h={4}><path d="M0.500 3.500h5L3 0.500z" fill="#5f656c" stroke="none" /></Svg></IconButton>
        </div>
      </div>
    </div>
  );
}

function DrawingArea() {
  return (
    <main className="relative min-h-[487px] flex-1 overflow-hidden bg-[#212830]">
      <Model />
      <div className="relative flex items-start justify-between pt-[5px] pl-[3px]">
        <p className="text-[11px] leading-4 text-[#d0d4d9]">[−][Top][2D Wireframe]</p>
        <div className="flex items-center gap-2 pt-1 pr-2.5">
          <IconButton label="Minimize viewport" className="size-2.5"><Svg s={10}><path d="M0.500 7.500h9" stroke="#fff" strokeWidth="2" /></Svg></IconButton>
          <IconButton label="Maximize viewport" className="size-2.5"><Svg s={10}><path d="M3 2V1h6v6H8" stroke="#fff" strokeWidth="1.200" /><path d="M1 3.500h5.500V9H1z" stroke="#fff" strokeWidth="1.600" /></Svg></IconButton>
          <IconButton label="Close viewport" className="size-2.5"><Svg s={10}><path d="M1.500 1.500l7 7M8.500 1.500l-7 7" stroke="#fff" strokeWidth="2" /></Svg></IconButton>
        </div>
      </div>
      <div className="absolute top-[33px] right-[11px] flex flex-col items-center">
        <ViewCube />
        <button type="button" className="mt-[14px] h-4 w-[44px] rounded-[3px] border border-[#9a9fa4] bg-[#868c91] pl-[3px] text-left text-[11px] leading-[13px] text-[#50565c]">WCS</button>
      </div>
      <div className="absolute top-[179px] right-[3px]"><NavBar /></div>
      <div className="absolute right-[52px] bottom-[3px] w-[218px] leading-5 whitespace-nowrap text-[#717980]">
        <p className="text-[18px] leading-6">Activate Windows</p>
        <p className="text-right text-[14px]">to Settings to activate Windows.</p>
      </div>
      <CommandLine />
      <div className="absolute right-0 bottom-[15px] flex flex-col items-end gap-[10px]">
        <KeyBadge className="h-[30px] w-[28px] text-[14px]">10</KeyBadge>
        <KeyBadge className="h-[30px] w-[55px] text-[14px]">Return</KeyBadge>
        <KeyBadge className="h-[37px] w-[44px] text-[19px]">Esc</KeyBadge>
      </div>
    </main>
  );
}

/* ---------- status bar ---------- */

const W = "#eef1f4";
const Anno = () => <path d="M8 1l2 7 5 6-7-4-7 4 5-6z" fill={W} stroke={W} strokeWidth="0.600" />;

const statusItems = [
  ["Grid", "ml-[3px] w-[21px] bg-[#5b89bb]", <Svg><path d="M4.500 1v14M8.500 1v14M12.500 1v14M1 4.500h14M1 8.500h14M1 12.500h14" stroke={W} strokeWidth="1.300" /></Svg>],
  ["Snap", "ml-px w-[22px] bg-[#313a47]", <Svg>{[2, 7, 12].flatMap((x) => [2, 7, 12].map((y) => <rect key={`${x}${y}`} x={x} y={y} width="2" height="2" fill={LIGHT} stroke="none" />))}</Svg>],
  ["Snap options", "w-4 bg-[#313a47]", <Caret big />],
  ["Dynamic input", "ml-[2px] w-[21px] bg-[#5b89bb]", <Svg><path d="M4 1v7M0.500 4.500h7" stroke={W} /><path d="M6 9.500h9v4H6z" fill="#fff" stroke="none" /></Svg>],
  ["Ortho", "w-[23px] bg-[#313a47]", <Svg><path d="M1.500 1v13.500H16" strokeWidth="1.300" /><path d="M1.500 9.500h4v5" /></Svg>],
  ["Polar", "w-[23px] bg-[#313a47]", <Svg><circle cx="7" cy="8.500" r="5.500" strokeWidth="1.300" /><path d="M7 8.500h9M7 8.500l6-6" strokeWidth="1.300" /></Svg>],
  ["Polar options", "w-[15px] bg-[#313a47]", <Caret big />],
  ["Isodraft", "w-[22px] bg-[#313a47]", <Svg><path d="M1 2l13 13" stroke="#b86a6a" /><path d="M8.500 1v15" stroke="#8fbf8f" /><circle cx="8" cy="9" r="1.500" fill={LIGHT} stroke="none" /></Svg>],
  ["Isodraft options", "w-[15px] bg-[#313a47]", <Caret big />],
  ["Object snap tracking", "ml-[2px] w-[21px] bg-[#5b89bb]", <Svg><path d="M14 2L2 13.500h13" stroke={W} strokeWidth="1.300" /></Svg>],
  ["Object snap", "ml-px w-[21px] bg-[#5b89bb]", <Svg><path d="M3 3.500h11.500v11H3z" stroke={W} strokeWidth="1.300" /><path d="M1 1h4v4H1z" fill="#5b89bb" stroke={W} /></Svg>],
  ["Object snap options", "w-4 bg-[#313a47]", <Caret big />],
  ["Lineweight display", "w-[22px] bg-[#313a47]", <Svg><path d="M1 2.500h8M10 2.500h5" /><path d="M1 6h8M1 9.500h8M1 13.500h8" strokeWidth="2" /><path d="M8 6h7M8 9.500h7M8 13.500h7" /></Svg>],
  ["Selection cycling", "ml-[2px] w-[21px] bg-[#5b89bb]", <Svg><path d="M3 0.500v6M0 3.500h6" stroke={W} /><path d="M5 4h8v3h2v8H7v-2H5z" fill={W} stroke="none" /></Svg>],
  ["Dynamic UCS", "ml-1 w-[21px] bg-[#5b89bb]", <Svg><path d="M3.500 3v9.500H14M1.500 4.500l2-3 2 3M12 10.500l3 2-3 2" stroke={W} strokeWidth="1.300" /><path d="M11 1L7.500 6h3L8 10l6-5.500h-3L13 1z" fill={W} stroke="none" /></Svg>],
  ["Annotation visibility", "ml-1 w-[21px] bg-[#5b89bb]", <Svg><Anno /><circle cx="12" cy="4" r="2.500" fill="#5b89bb" stroke={W} /></Svg>],
  ["Auto scale", "w-[22px] bg-[#313a47]", <Svg><Anno /><path d="M13 0l-3 4h2l-1 4 4-5h-2z" fill={W} stroke="none" /></Svg>],
  ["Annotation", "w-[23px] bg-[#313a47]", <Svg><Anno /></Svg>],
  ["Annotation scale", "w-[20px] bg-[#313a47]", <span className="text-[11px] leading-4 text-[#e4e7eb]">1:1</span>],
  ["Scale list", "w-[11px] bg-[#313a47]", <Caret big />],
  ["Workspace", "ml-[3px] w-[22px] bg-[#313a47]", <Svg><circle cx="8" cy="8" r="4" stroke={W} strokeWidth="3" /><path d="M8 0.500v3M8 12.500v3M0.500 8h3M12.500 8h3M2.700 2.700l2 2M11.300 11.300l2 2M13.300 2.700l-2 2M4.700 11.300l-2 2" stroke={W} strokeWidth="2.200" /></Svg>],
  ["Workspace list", "w-[15px] bg-[#313a47]", <Caret big />],
  ["Annotation monitor", "w-6 bg-[#313a47]", <Svg><path d="M8 1v14M1 8h14" stroke={W} strokeWidth="1.500" /></Svg>],
  ["Units", "ml-[2px] w-[22px] bg-[#313a47]", <Svg><path d="M7 12.500H1.500v-11h13V6M2 3.500h12" /><path d="M8.500 10h6v5h-6z" fill={W} stroke="none" /><path d="M12.500 10V8a1.500 1.500 0 0 1 3 0v1" /></Svg>],
  ["Units list", "w-[15px] bg-[#313a47]", <Caret big />],
  ["Isolate objects", "ml-px w-6 bg-[#313a47]", <Svg><path d="M1.500 1.500h5v5h-5zM8 10l3 5H5z" /><circle cx="12.500" cy="6.500" r="2.500" /></Svg>],
  ["Clean screen", "ml-[2px] w-[20px] bg-[#313a47]", <Svg><path d="M1 3.500h14v10H1z" /><path d="M9 7l3-2M10.500 5h2v2M7 10l-3 2M3.500 10v2h2" /></Svg>],
  ["Customization", "mr-px w-6 bg-[#313a47]", <Svg><path d="M0.500 3h15M0.500 8h15M0.500 13h15" stroke={W} strokeWidth="1.600" /></Svg>],
];

const tabShape = "h-4 leading-4 [clip-path:polygon(0_0,100%_0,calc(100%_-_6px)_100%,6px_100%)]";

function StatusBar() {
  return (
    <footer className="flex h-[27px] items-start justify-between border-t border-[#303944] bg-[#222932]">
      <nav aria-label="Layouts" className="flex gap-px pl-[7px] text-[11px]">
        <button type="button" className={`w-[58px] bg-[#3b4453] font-bold text-white ${tabShape}`}>Model</button>
        <button type="button" className={`w-[56px] bg-[#2d3540] text-[#c3c8ce] ${tabShape}`}>Layout1</button>
        <button type="button" className={`w-[62px] bg-[#2d3540] text-[#c3c8ce] ${tabShape}`}>Layout2</button>
        <IconButton label="New layout" className={`w-[26px] bg-[#2a323c] ${tabShape}`}><Svg s={8}><path d="M4 0.500v7M0.500 4h7" stroke="#b9bfc7" /></Svg></IconButton>
      </nav>
      <div className="flex h-[23px] items-stretch pt-px">
        <button type="button" className="w-11 bg-[#313a47] text-[11px] leading-[22px] text-[#e4e7eb]">MODEL</button>
        {statusItems.map(([label, cls, icon]) => (
          <IconButton key={label} label={label} className={cls}>{icon}</IconButton>
        ))}
      </div>
    </footer>
  );
}

function Taskbar() {
  return (
    <div className="flex h-[7px] items-stretch overflow-hidden bg-[#1c1c1c]">
      <div className="ml-11 flex h-[7px] w-[318px] items-end justify-end gap-[38px] overflow-hidden bg-[#f3f4f3] pr-3">
        <span className="h-[3px] w-1.5 rounded-t-full bg-[#d9b93a]" />
        <span className="h-[2px] w-1 bg-[#4d7f86]" />
      </div>
      <span className="ml-[141px] w-[25px] bg-[#3b7537]" />
      <span className="w-3 bg-[#333333]" />
      <span className="ml-[5px] w-[45px] bg-[#4f4f4f]" />
      <time className="mr-[50px] ml-auto pt-[3px] text-[11px] leading-3 text-[#e6e6e6]">11:17 PM</time>
      <span className="mr-1 w-px bg-[#4f4f4f]" />
    </div>
  );
}

export default function App() {
  return (
    <div className="relative flex min-h-screen flex-col bg-black px-2 pt-[23px] pb-4 font-['Lato','Noto_Sans',sans-serif] text-[11px]">
      <div className="flex flex-1 flex-col bg-[#222932]">
        <Header />
        <Ribbon />
        <FileTabs />
        <DrawingArea />
        <StatusBar />
        <Taskbar />
      </div>
      <svg aria-hidden="true" width="10" height="28" viewBox="0 0 10 28" fill="none" stroke="#e6e6e6" className="absolute top-[102px] right-0">
        <path d="M2 1l8 8M3 7l7 7M1 10l9 3-8 3 8 3M2 12l5 13M1 19l3 6 6-4" />
      </svg>
    </div>
  );
}
